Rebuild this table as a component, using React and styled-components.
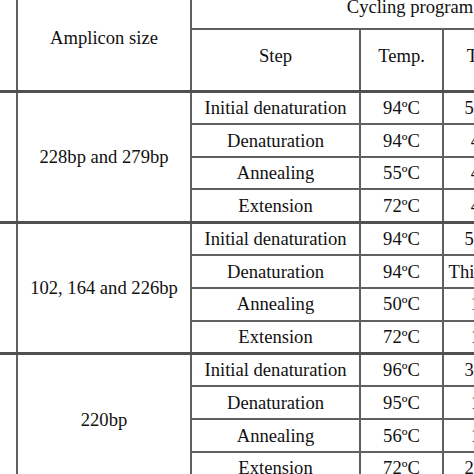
import styled, { createGlobalStyle } from "styled-components";

const GlobalStyle = createGlobalStyle`
  html, body {
    margin: 0;
    padding: 0;
    background: #fff;
    overflow: hidden;
  }
  body {
    font-family: "Liberation Serif", "Times New Roman", serif;
  }
`;

const groups = [
  {
    size: "228bp and 279bp",
    steps: [
      ["Initial denaturation", "94ºC", "5 min", "1"],
      ["Denaturation", "94ºC", "45 s", "35"],
      ["Annealing", "55ºC", "45 s", ""],
      ["Extension", "72ºC", "45 s", ""],
    ],
  },
  {
    size: "102, 164 and 226bp",
    steps: [
      ["Initial denaturation", "94ºC", "5 min", "1"],
      ["Denaturation", "94ºC", "Thirty sec", "40"],
      ["Annealing", "50ºC", "15 s", ""],
      ["Extension", "72ºC", "15 s", ""],
    ],
  },
  {
    size: "220bp",
    steps: [
      ["Initial denaturation", "96ºC", "3 min", "1"],
      ["Denaturation", "95ºC", "15 s", "40"],
      ["Annealing", "56ºC", "15 s", ""],
      ["Extension", "72ºC", "2 min", ""],
    ],
  },
];

const Frame = styled.div`
  width: 474px;
  height: 474px;
  overflow: hidden;
`;

// the table is wider than the crop, so it is pulled up and left
const Table = styled.table`
  border-collapse: collapse;
  table-layout: fixed;
  width: 712px;
  margin: -16px 0 0 -84px;
  color: #111;
  font-size: 18.6px;
`;

const Col = styled.col`
  width: ${(p) => p.$w}px;
`;

const Row = styled.tr`
  height: ${(p) => p.$h}px;
`;

const Cell = styled.td`
  border: 2px solid #606060;
  border-top: ${(p) => (p.$thick ? "3px solid #505050" : "2px solid #606060")};
  padding: 0 0 ${(p) => p.$lift || 0}px;
  text-align: center;
  vertical-align: middle;
  white-space: nowrap;
  overflow: hidden;
  line-height: 1.15;
`;

const Head = styled(Cell).attrs({ as: "th" })`
  font-weight: normal;
`;

export default function App() {
  return (
    <Frame>
      <GlobalStyle />
      <Table>
        <colgroup>
          <Col $w={100} />
          <Col $w={174} />
          <Col $w={169} />
          <Col $w={83} />
          <Col $w={86} />
          <Col $w={100} />
        </colgroup>
        <thead>
          <Row $h={44}>
            <Head rowSpan={2}>Gene</Head>
            <Head rowSpan={2}>Amplicon size</Head>
            <Head colSpan={4}>Cycling program</Head>
          </Row>
          <Row $h={62}>
            <Head $lift={9}>Step</Head>
            <Head $lift={9}>Temp.</Head>
            <Head $lift={9}>Time</Head>
            <Head $lift={9}>Cycles</Head>
          </Row>
        </thead>
        <tbody>
          {groups.map((g) =>
            g.steps.map((s, i) => (
              <Row key={g.size + i} $h={32.8}>
                {i === 0 && (
                  <>
                    <Cell rowSpan={4} $thick />
                    <Cell rowSpan={4} $thick>
                      {g.size}
                    </Cell>
                  </>
                )}
                <Cell $thick={i === 0}>{s[0]}</Cell>
                <Cell $thick={i === 0}>{s[1]}</Cell>
                <Cell $thick={i === 0}>{s[2]}</Cell>
                <Cell $thick={i === 0}>{s[3]}</Cell>
              </Row>
            ))
          )}
        </tbody>
      </Table>
    </Frame>
  );
}
